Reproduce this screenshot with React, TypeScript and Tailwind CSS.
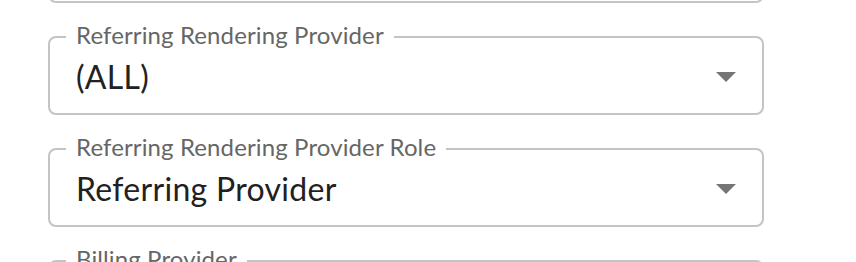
import React from "react";

type Field = { label: string; value: string };

const fields: Field[] = [
  { label: "Rendering Provider", value: "(ALL)" },
  { label: "Referring Rendering Provider", value: "(ALL)" },
  { label: "Referring Rendering Provider Role", value: "Referring Provider" },
  { label: "Billing Provider", value: "(ALL)" },
];

function SelectField({ label, value }: Field) {
  return (
    <div className="relative flex h-[79px] shrink-0 items-center justify-between rounded-lg border-2 border-[#c4c4c4] pt-[2px] pl-[26px] pr-[26px]">
      <span className="absolute left-[16px] top-[-15px] bg-white px-[10px] text-[24px] leading-[24px] tracking-[0.12px] text-[#666666] whitespace-nowrap">
        {label}
      </span>
      <span className="text-[32px] leading-[32px] tracking-[0.3px] text-[#212121] whitespace-nowrap">{value}</span>
      <svg width="20" height="10" viewBox="0 0 20 10" className="shrink-0">
        <polygon points="0,0 20,0 10,10" fill="#757575" />
      </svg>
    </div>
  );
}

export default function App() {
  return (
    <div
      className="h-[262px] w-[856px] overflow-hidden bg-white"
      style={{ fontFamily: "Lato, 'Noto Sans', sans-serif" }}
    >
      <div className="ml-[48px] mt-[-76px] flex w-[716px] flex-col gap-[33px]">
        {fields.map((f) => (
          <SelectField key={f.label} {...f} />
        ))}
      </div>
    </div>
  );
}
